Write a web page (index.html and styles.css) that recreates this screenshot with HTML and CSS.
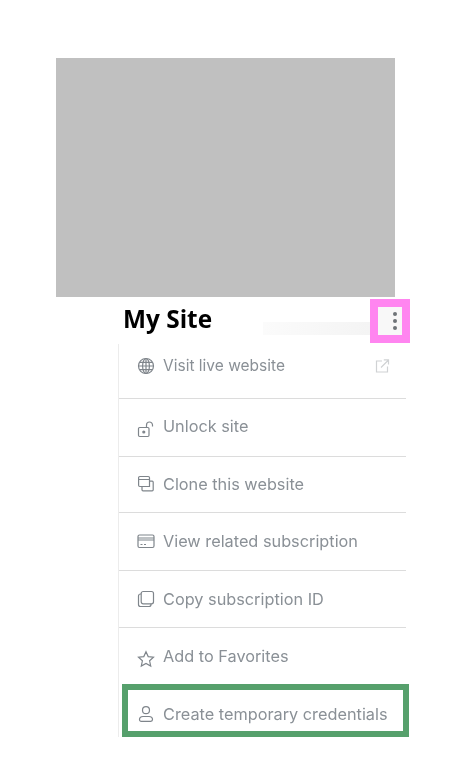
FILE: index.html
```html
<!DOCTYPE html>
<html lang="en">
<head>
<meta charset="utf-8">
<title>My Site</title>
<link rel="stylesheet" href="styles.css">
</head>
<body>
<main class="page">
  <div class="preview"></div>
  <div class="panel">
    <header class="title-row">
      <h1 class="title">My Site</h1>
      <div class="fade"></div>
      <button class="kebab" aria-label="More"><span></span><span></span><span></span></button>
    </header>
    <ul class="menu">
      <li class="item item-first">
        <svg class="icon" viewBox="0 0 18 18"><circle cx="9" cy="9" r="7.5"/><ellipse cx="9" cy="9" rx="3.4" ry="7.5"/><path d="M9 1.5v15M1.5 9h15M2.6 5.3h12.8M2.6 12.7h12.8"/></svg>
        <span class="label">Visit live website</span>
        <svg class="ext" viewBox="0 0 16 16"><path d="M8 3H2.5v11h11V8.5M7 9.5 14.500 2M9.800 1.800h4.700v4.700"/></svg>
      </li>
      <li class="item item-unlock">
        <svg class="icon icon-low" viewBox="0 0 18 18"><rect x="1.500" y="7.500" width="10.500" height="9" rx="1.200"/><circle cx="6.800" cy="12" r="1" class="dot"/><path d="M9.500 7.500V5a3 3 0 0 1 6 0v1.600"/></svg>
        <span class="label">Unlock site</span>
      </li>
      <li class="item item-clone">
        <svg class="icon" viewBox="0 0 18 18"><path d="M12.500 11.500H2.800a1.200 1.200 0 0 1-1.200-1.200V2.700a1.200 1.200 0 0 1 1.200-1.200h8.500a1.200 1.200 0 0 1 1.200 1.200ZM1.600 4.500h10.900"/><path d="M5 11.500v3.300a1 1 0 0 0 1 1h9.200a1 1 0 0 0 1-1V7.200a1 1 0 0 0-1-1h-2.700"/></svg>
        <span class="label">Clone this website</span>
      </li>
      <li class="item item-sub">
        <svg class="icon" viewBox="0 0 18 18"><rect x="1" y="3" width="16" height="12.500" rx="1.500"/><path d="M1 6h16M1 8h16M3.500 12.500h2M7 12.500h2"/></svg>
        <span class="label">View related subscription</span>
      </li>
      <li class="item item-copy">
        <svg class="icon" viewBox="0 0 18 18"><rect x="4.200" y="1.500" width="12.300" height="12.300" rx="2"/><path d="M4.200 4H3.500a2 2 0 0 0-2 2v8.500a2 2 0 0 0 2 2H12a2 2 0 0 0 2-2v-.7"/></svg>
        <span class="label">Copy subscription ID</span>
      </li>
      <li class="item item-fav">
        <svg class="icon icon-low" viewBox="0 0 18 18"><path d="m9 1.800 2.200 4.800 5.300.6-3.900 3.600 1.100 5.200L9 13.400 4.300 16l1.100-5.200-3.900-3.600 5.300-.6Z"/></svg>
        <span class="label">Add to Favorites</span>
      </li>
      <li class="item item-cred">
        <svg class="icon" viewBox="0 0 18 18"><circle cx="9" cy="5.200" r="3.500"/><path d="M4.200 16.300h9.600a1.700 1.700 0 0 0 1.700-1.700c0-2-1.700-3.100-3.500-3.100H6c-1.800 0-3.500 1.100-3.500 3.100a1.700 1.700 0 0 0 1.700 1.700Z"/></svg>
        <span class="label">Create temporary credentials</span>
      </li>
    </ul>
  </div>
</main>
</body>
</html>
```

FILE: styles.css
```css
* { box-sizing: border-box; }
html, body { margin: 0; background: #fff; }
.page {
  width: 474px;
  height: 765px;
  padding: 58px 0 0 56px;
  overflow: hidden;
  filter: blur(0.4px);
}
.preview { width: 339px; height: 239px; background: #c0c0c0; }
.panel { width: 354px; padding-left: 62px; }
.title-row { display: flex; align-items: stretch; height: 47px; padding-top: 2px; }
.title {
  margin: 0 0 0 5px;
  width: 140px;
  font: 700 24.400px/40px "Open Sans", sans-serif;
  color: #000;
}
.fade {
  flex: 1;
  align-self: flex-end;
  height: 13px;
  margin-bottom: 9px;
  background: linear-gradient(to right, #fbfbfb, #f4f4f4);
}
.kebab {
  width: 40px;
  height: 44px;
  padding: 0 0 0 10px;
  border: 8px solid #ff85f0;
  background: #f8f8f8;
  display: flex;
  flex-direction: column;
  align-items: center;
  justify-content: center;
  gap: 3px;
}
.kebab span { width: 4px; height: 4px; border-radius: 50%; background: #6f7478; }
.menu {
  list-style: none;
  margin: 0;
  padding: 0;
  width: 288px;
  border-left: 1px solid #ececec;
  font: 400 16.300px/20px Inter, sans-serif;
  color: #8a9096;
}
.item {
  display: flex;
  align-items: center;
  gap: 8px;
  padding-left: 18px;
  border-bottom: 1px solid #dcdcdc;
}
.item-first { height: 55px; padding-bottom: 10px; font-size: 15.500px; }
.item-unlock { height: 58px; padding-bottom: 3px; }
.item-clone { height: 56px; padding-bottom: 1px; }
.item-sub { height: 58px; padding-bottom: 2px; }
.item-copy { height: 57px; }
.item-fav { height: 56px; border-bottom: 0; }
.item-cred {
  width: 287px;
  height: 53px;
  margin-left: 3px;
  padding-left: 9px;
  padding-top: 6px;
  border: 6.500px solid #56a06c;
}
.label { flex: 1; white-space: nowrap; }
.icon, .ext { flex: none; fill: none; stroke: #7f858b; stroke-width: 1.200; }
.icon { width: 18px; height: 18px; }
.icon-low { margin-top: 5px; }
.ext { width: 16px; height: 16px; margin-right: 16px; stroke: #d0d2d4; }
.dot { fill: #7f858b; }
```
